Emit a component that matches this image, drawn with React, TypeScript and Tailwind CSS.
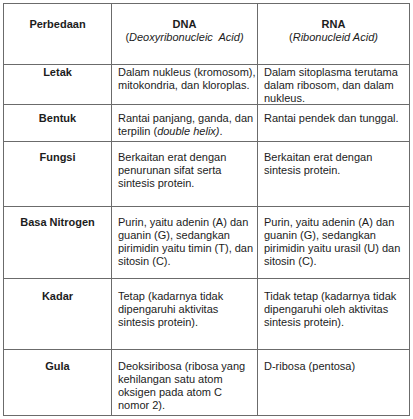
const rows = [
  {
    label: "Letak",
    h: "h-[40px]",
    pt: "pt-[1px]",
    dna: ["Dalam nukleus (kromosom),", "mitokondria, dan kloroplas."],
    rna: ["Dalam sitoplasma terutama", "dalam ribosom, dan dalam", "nukleus."],
  },
  {
    label: "Bentuk",
    h: "h-[37px]",
    pt: "pt-[7px]",
    dna: ["Rantai panjang, ganda, dan", "helix"],
    rna: ["Rantai pendek dan tunggal."],
  },
  {
    label: "Fungsi",
    h: "h-[65px]",
    pt: "pt-[9px]",
    dna: ["Berkaitan erat dengan", "penurunan sifat serta", "sintesis protein."],
    rna: ["Berkaitan erat dengan", "sintesis protein."],
  },
  {
    label: "Basa Nitrogen",
    h: "h-[72px]",
    pt: "pt-[9px]",
    dna: [
      "Purin, yaitu adenin (A) dan",
      "guanin (G), sedangkan",
      "pirimidin yaitu timin (T), dan",
      "sitosin (C).",
    ],
    rna: [
      "Purin, yaitu adenin (A) dan",
      "guanin (G), sedangkan",
      "pirimidin yaitu urasil (U) dan",
      "sitosin (C).",
    ],
  },
  {
    label: "Kadar",
    h: "h-[71px]",
    pt: "pt-[11px]",
    dna: ["Tetap (kadarnya tidak", "dipengaruhi aktivitas", "sintesis protein)."],
    rna: ["Tidak tetap (kadarnya tidak", "dipengaruhi oleh aktivitas", "sintesis protein)."],
  },
  {
    label: "Gula",
    h: "h-[66px]",
    pt: "pt-[10px]",
    dna: [
      "Deoksiribosa (ribosa yang",
      "kehilangan satu atom",
      "oksigen pada atom C",
      "nomor 2).",
    ],
    rna: ["D-ribosa (pentosa)"],
  },
];

function Lines({ lines }: { lines: string[] }) {
  return (
    <>
      {lines.map((l, i) =>
        l === "helix" ? (
          <div key={i}>
            terpilin (<i>double helix)</i>.
          </div>
        ) : (
          <div key={i}>{l}</div>
        )
      )}
    </>
  );
}

export default function App() {
  return (
    <div className="w-[413px] h-[419px] bg-white pl-[3px] pt-[3px] font-['Liberation_Sans',Arial,sans-serif] text-[11px] leading-[13px] text-[#1c1c1c]">
      <div className="grid w-[407px] grid-cols-[108px_146px_152px] border-l border-t border-[#6b6b6b]">
        <div className="h-[61px] border-b border-r border-[#6b6b6b] pt-[14px] text-center font-bold">
          Perbedaan
        </div>
        <div className="h-[61px] border-b border-r border-[#6b6b6b] pt-[14px] text-center">
          <div className="font-bold">DNA</div>
          <div>
            (<i>Deoxyribonucleic&nbsp; Acid)</i>
          </div>
        </div>
        <div className="h-[61px] border-b border-r border-[#6b6b6b] pt-[14px] text-center">
          <div className="font-bold">RNA</div>
          <div>
            (<i>Ribonucleid Acid)</i>
          </div>
        </div>

        {rows.map((r) => (
          <div key={r.label} className="contents">
            <div className={`${r.h} ${r.pt} border-b border-r border-[#6b6b6b] text-center font-bold`}>
              {r.label}
            </div>
            <div className={`${r.h} ${r.pt} border-b border-r border-[#6b6b6b] pl-[6px] whitespace-nowrap`}>
              <Lines lines={r.dna} />
            </div>
            <div className={`${r.h} ${r.pt} border-b border-r border-[#6b6b6b] pl-[6px] whitespace-nowrap`}>
              <Lines lines={r.rna} />
            </div>
          </div>
        ))}
      </div>
    </div>
  );
}
